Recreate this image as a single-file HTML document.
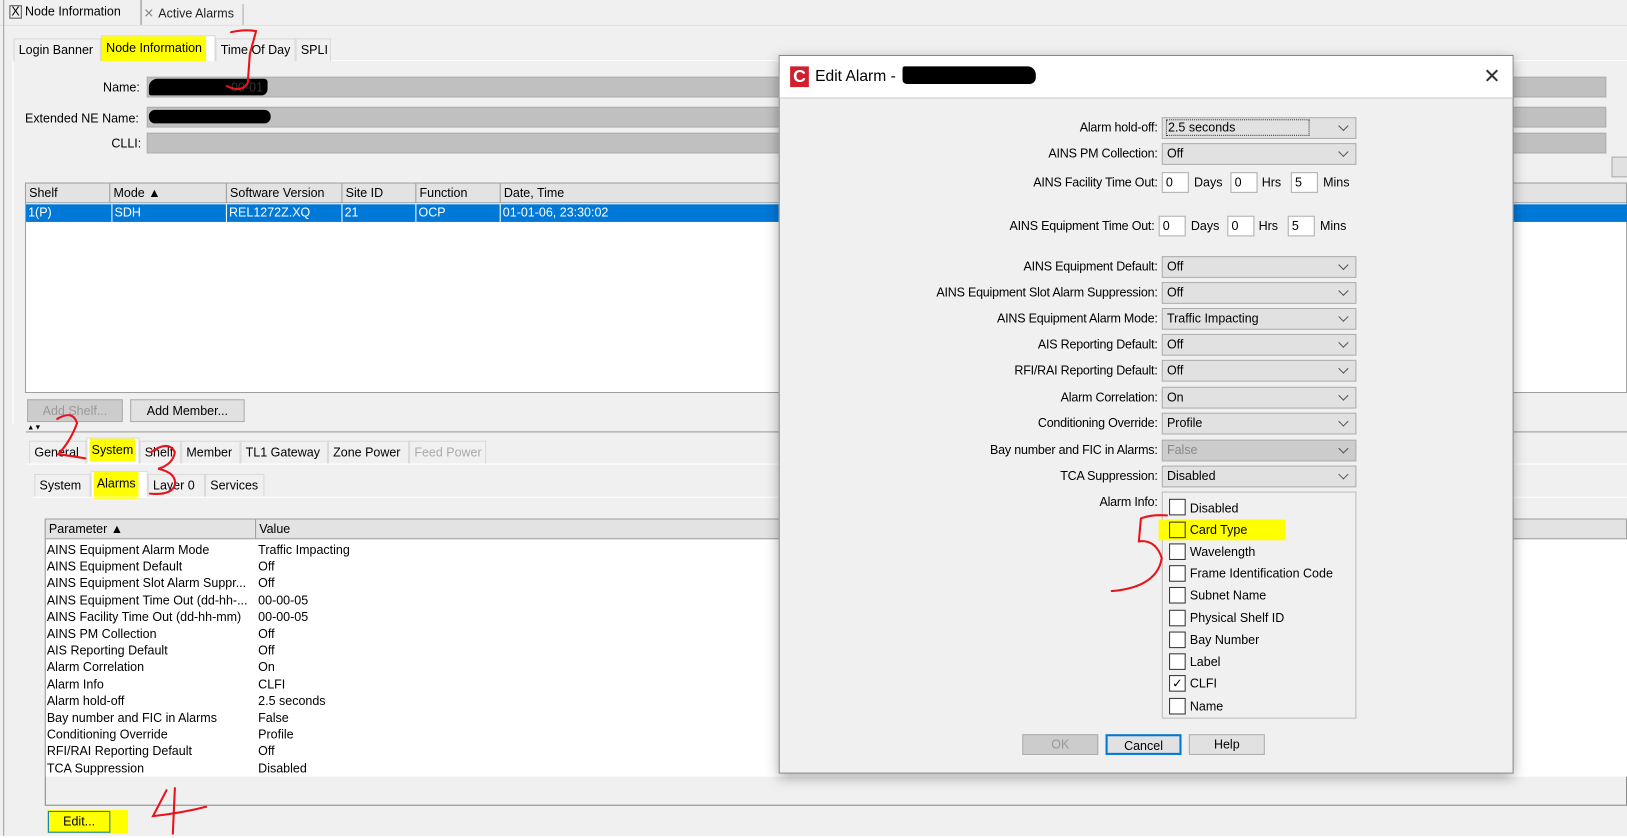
<!DOCTYPE html>
<html><head><meta charset="utf-8"><style>
*{box-sizing:border-box;margin:0;padding:0}
html,body{width:1627px;height:838px;overflow:hidden;background:#fff}
#s{position:absolute;left:0;top:0;width:1563px;height:808px;transform:scale(1.041,1.037);transform-origin:0 0;background:#f0f0f0;font-family:"Liberation Sans",Arial,sans-serif;font-size:12px;color:#000}
.a{position:absolute;white-space:nowrap}
.tab{position:absolute;height:22px;border:1px solid #d9d9d9;border-bottom:none;background:#f0f0f0;line-height:21px;padding-left:4px}
.sel{background:#fff}
.fld{position:absolute;background:#c0c0c0;border:1px solid #adadad;height:20px}
.th{position:absolute;height:20px;background:#e3e3e3;border:1px solid #a0a0a0;line-height:18px;padding-left:3px}
.btn{position:absolute;height:22px;border:1px solid #adadad;background:#e1e1e1;text-align:center;line-height:20px}
.lbl{position:absolute;right:341px;text-align:right;letter-spacing:-0.2px}
.cb{position:absolute;left:367px;width:187px;height:21px;background:#e1e1e1;border:1px solid #adadad;line-height:19px;padding-left:4px}
.cb:after{content:"";position:absolute;right:8px;top:4px;width:6px;height:6px;border-right:1px solid #555;border-bottom:1px solid #555;transform:rotate(45deg)}
.tb{position:absolute;width:26px;height:20px;background:#fff;border:1px solid #adadad;line-height:18px;padding-left:3px}
.ck{position:absolute;left:6px;width:16px;height:16px;background:#fff;border:1px solid #333}
.hl{background:#ffff00}
</style></head><body><div id="s">
<div class="a" style="left:0;top:0;width:1563px;height:25px;border-bottom:1px solid #e0e0e0"></div>
<div class="a" style="left:3px;top:0;width:1px;height:808px;background:#a0a0a0"></div>
<div class="a" style="left:9px;top:0;width:127px;height:24px;border-right:1px solid #888;line-height:22px"><span style="display:inline-block;width:12px;height:13px;border:1px solid #555;text-align:center;line-height:11px;font-size:12px;vertical-align:middle;margin-right:3px">X</span>Node Information</div>
<div class="a" style="left:138px;top:4px;width:96px;height:20px;border-right:1px solid #aaa;line-height:18px;color:#222"><span style="color:#888;margin-right:4px">✕</span>Active Alarms</div>
<div class="a" style="left:12px;top:58px;width:1551px;height:1px;background:#fff"></div>
<div class="tab" style="left:13px;top:37px;width:84px">Login Banner</div>
<div class="tab sel" style="left:97px;top:34px;width:110px;height:25px"><span class="hl" style="padding:2px 4px;display:inline-block;margin-left:-4px;line-height:19px;height:27px">Node Information</span></div>
<div class="tab" style="left:207px;top:37px;width:77px">Time Of Day</div>
<div class="tab" style="left:284px;top:37px;width:34px">SPLI</div>
<div class="a" style="left:12px;top:59px;width:1551px;height:350px;background:#f0f0f0;border-left:1px solid #fff"></div>
<div class="a" style="left:99px;top:77px">Name:</div>
<div class="a" style="left:24px;top:107px">Extended NE Name:</div>
<div class="a" style="left:107px;top:131px">CLLI:</div>
<div class="fld" style="left:141px;top:74px;width:1402px"></div>
<div class="fld" style="left:141px;top:103px;width:1402px"></div>
<div class="fld" style="left:141px;top:128px;width:1402px"></div>
<div class="a" style="left:143px;top:76px;width:114px;height:16px;background:#000;border-radius:8px 3px 6px 2px"></div>
<div class="a" style="left:222px;top:77px;color:#333">00-01</div>
<div class="a" style="left:143px;top:106px;width:117px;height:13px;background:#000;border-radius:6px"></div>
<div class="btn" style="left:1548px;top:151px;width:20px;height:20px"></div>
<div class="a" style="left:24px;top:176px;width:1539px;height:203px;background:#fff;border:1px solid #a0a0a0"></div>
<div class="th" style="left:24px;top:176px;width:82px">Shelf</div>
<div class="th" style="left:105px;top:176px;width:113px">Mode ▲</div>
<div class="th" style="left:217px;top:176px;width:112px">Software Version</div>
<div class="th" style="left:328px;top:176px;width:72px">Site ID</div>
<div class="th" style="left:399px;top:176px;width:82px">Function</div>
<div class="th" style="left:480px;top:176px;width:1083px">Date, Time</div>
<div class="a" style="left:25px;top:197px;width:1538px;height:17px;background:#0078d7;color:#fff;line-height:17px">
<span class="a" style="left:2px">1(P)</span><span class="a" style="left:82px;border-left:1px solid #fff;padding-left:2px">SDH</span><span class="a" style="left:192px;border-left:1px solid #fff;padding-left:2px">REL1272Z.XQ</span><span class="a" style="left:303px;border-left:1px solid #fff;padding-left:2px">21</span><span class="a" style="left:374px;border-left:1px solid #fff;padding-left:2px">OCP</span><span class="a" style="left:455px;border-left:1px solid #fff;padding-left:2px">01-01-06, 23:30:02</span></div>
<div class="btn" style="left:26px;top:385px;width:92px;color:#999;background:#ccc">Add Shelf...</div>
<div class="btn" style="left:125px;top:385px;width:110px">Add Member...</div>
<div class="a" style="left:25px;top:416px;width:1538px;height:1px;background:#999"></div>
<div class="a" style="left:26px;top:409px;font-size:7px">▲▼</div>
<div class="tab" style="left:28px;top:425px;width:55px">General</div>
<div class="tab sel" style="left:83px;top:422px;width:51px;height:25px"><span class="hl" style="display:inline-block;margin-left:-2px;padding:0 2px;line-height:22px">System</span></div>
<div class="tab" style="left:134px;top:425px;width:40px">Shelf</div>
<div class="tab" style="left:174px;top:425px;width:57px">Member</div>
<div class="tab" style="left:231px;top:425px;width:84px">TL1 Gateway</div>
<div class="tab" style="left:315px;top:425px;width:78px">Zone Power</div>
<div class="tab" style="left:393px;top:425px;width:74px;color:#aaa">Feed Power</div>
<div class="a" style="left:25px;top:447px;width:1538px;height:1px;background:#fff"></div>
<div class="tab" style="left:33px;top:457px;width:54px">System</div>
<div class="tab sel" style="left:87px;top:454px;width:55px;height:25px"><span class="hl" style="display:inline-block;margin-left:-2px;padding:0 3px;line-height:22px;height:26px">Alarms</span></div>
<div class="tab" style="left:142px;top:457px;width:55px">Layer 0</div>
<div class="tab" style="left:197px;top:457px;width:57px">Services</div>
<div class="a" style="left:32px;top:479px;width:1531px;height:1px;background:#fff"></div>
<div class="a" style="left:43px;top:500px;width:1520px;height:277px;border:1px solid #888;background:#f0f0f0"></div>
<div class="a" style="left:44px;top:520px;width:1519px;height:229px;background:#fff"></div>
<div class="th" style="left:43px;top:500px;width:203px">Parameter ▲</div>
<div class="th" style="left:245px;top:500px;width:1318px">Value</div>
<div class="a" style="left:45px;top:522px;line-height:16.2px">AINS Equipment Alarm Mode<br>AINS Equipment Default<br>AINS Equipment Slot Alarm Suppr...<br>AINS Equipment Time Out (dd-hh-...<br>AINS Facility Time Out (dd-hh-mm)<br>AINS PM Collection<br>AIS Reporting Default<br>Alarm Correlation<br>Alarm Info<br>Alarm hold-off<br>Bay number and FIC in Alarms<br>Conditioning Override<br>RFI/RAI Reporting Default<br>TCA Suppression</div>
<div class="a" style="left:248px;top:522px;line-height:16.2px">Traffic Impacting<br>Off<br>Off<br>00-00-05<br>00-00-05<br>Off<br>Off<br>On<br>CLFI<br>2.5 seconds<br>False<br>Profile<br>Off<br>Disabled</div>
<div class="a hl" style="left:45px;top:781px;width:78px;height:23px"></div>
<div class="btn" style="left:46px;top:782px;width:60px;height:21px;border-color:#0078d7;background:transparent;line-height:19px">Edit...</div>
<div class="a" style="left:0;top:806px;width:1563px;height:2px;background:#fff"></div>
<!-- dialog -->
<div class="a" style="left:748px;top:53px;width:706px;height:693px;background:#f0f0f0;border:1px solid #888;box-shadow:0 4px 12px rgba(0,0,0,.35)">
<div class="a" style="left:0;top:0;width:704px;height:41px;background:#fff;border-bottom:1px solid #ccc"></div>
<div class="a" style="left:10px;top:10px;width:18px;height:20px;background:#d0202e;color:#fff;font-weight:bold;font-size:17px;line-height:20px;text-align:center">C</div>
<div class="a" style="left:34px;top:10px;font-size:15px;line-height:20px">Edit Alarm -</div>
<div class="a" style="left:118px;top:10px;width:128px;height:17px;background:#000;border-radius:2px 8px 6px 4px"></div>
<div class="a" style="left:676px;top:7px;font-size:20px;font-weight:300;color:#333">✕</div>
<div class="lbl" style="top:62px">Alarm hold-off:</div>
<div class="cb" style="top:59px"><span style="outline:1px dotted #333;padding:0 70px 0 1px">2.5 seconds</span></div>
<div class="lbl" style="top:87px">AINS PM Collection:</div><div class="cb" style="top:84px">Off</div>
<div class="lbl" style="top:115px">AINS Facility Time Out:</div>
<div class="tb" style="left:367px;top:112px">0</div><div class="a" style="left:398px;top:115px">Days</div>
<div class="tb" style="left:433px;top:112px">0</div><div class="a" style="left:463px;top:115px">Hrs</div>
<div class="tb" style="left:491px;top:112px">5</div><div class="a" style="left:522px;top:115px">Mins</div>
<div class="lbl" style="top:157px;right:344px">AINS Equipment Time Out:</div>
<div class="tb" style="left:364px;top:154px">0</div><div class="a" style="left:395px;top:157px">Days</div>
<div class="tb" style="left:430px;top:154px">0</div><div class="a" style="left:460px;top:157px">Hrs</div>
<div class="tb" style="left:488px;top:154px">5</div><div class="a" style="left:519px;top:157px">Mins</div>
<div class="lbl" style="top:196px">AINS Equipment Default:</div><div class="cb" style="top:193px">Off</div>
<div class="lbl" style="top:221px">AINS Equipment Slot Alarm Suppression:</div><div class="cb" style="top:218px">Off</div>
<div class="lbl" style="top:246px">AINS Equipment Alarm Mode:</div><div class="cb" style="top:243px">Traffic Impacting</div>
<div class="lbl" style="top:271px">AIS Reporting Default:</div><div class="cb" style="top:268px">Off</div>
<div class="lbl" style="top:296px">RFI/RAI Reporting Default:</div><div class="cb" style="top:293px">Off</div>
<div class="lbl" style="top:322px">Alarm Correlation:</div><div class="cb" style="top:319px">On</div>
<div class="lbl" style="top:347px">Conditioning Override:</div><div class="cb" style="top:344px">Profile</div>
<div class="lbl" style="top:373px">Bay number and FIC in Alarms:</div><div class="cb" style="top:370px;background:#ccc;color:#888">False</div>
<div class="lbl" style="top:398px">TCA Suppression:</div><div class="cb" style="top:395px">Disabled</div>
<div class="lbl" style="top:423px">Alarm Info:</div>
<div class="a" style="left:367px;top:420px;width:187px;height:219px;border:1px solid #bbb">
<div class="a hl" style="left:-4px;top:26px;width:122px;height:20px"></div>
<div class="ck" style="top:6px"></div><div class="a" style="left:26px;top:8px">Disabled</div>
<div class="ck" style="top:28px;background:#ffff00"></div><div class="a" style="left:26px;top:29px">Card Type</div>
<div class="ck" style="top:49px"></div><div class="a" style="left:26px;top:50px">Wavelength</div>
<div class="ck" style="top:70px"></div><div class="a" style="left:26px;top:71px">Frame Identification Code</div>
<div class="ck" style="top:91px"></div><div class="a" style="left:26px;top:92px">Subnet Name</div>
<div class="ck" style="top:113px"></div><div class="a" style="left:26px;top:114px">Physical Shelf ID</div>
<div class="ck" style="top:134px"></div><div class="a" style="left:26px;top:135px">Bay Number</div>
<div class="ck" style="top:155px"></div><div class="a" style="left:26px;top:156px">Label</div>
<div class="ck" style="top:176px;text-align:center;line-height:14px;font-size:12px">✓</div><div class="a" style="left:26px;top:177px">CLFI</div>
<div class="ck" style="top:198px"></div><div class="a" style="left:26px;top:199px">Name</div>
</div>
<div class="btn" style="left:233px;top:654px;width:73px;height:20px;line-height:18px;background:#ccc;color:#999">OK</div>
<div class="btn" style="left:313px;top:654px;width:73px;height:20px;line-height:18px;border:2px solid #0078d7">Cancel</div>
<div class="btn" style="left:393px;top:654px;width:73px;height:20px;line-height:18px">Help</div>
</div>
<svg class="a" style="left:0;top:0" width="1563" height="808" fill="none" stroke="#e8141c" stroke-width="2" stroke-linecap="round">
<path d="M222 31 Q235 28 246 30 L240 52 L238 80 Q232 90 218 83"/>
<path d="M55 404 Q70 395 74 408 Q68 425 56 438 Q70 440 82 442"/>
<path d="M145 436 Q162 424 168 436 Q166 448 152 452 Q170 456 168 468 Q164 478 144 476"/>
<path d="M160 762 L147 787 Q175 784 198 778 M168 760 L166 804"/>
<path d="M1121 497 Q1105 496 1096 500 L1094 522 Q1110 520 1116 538 Q1112 566 1068 570"/>
</svg>
</div></body></html>
